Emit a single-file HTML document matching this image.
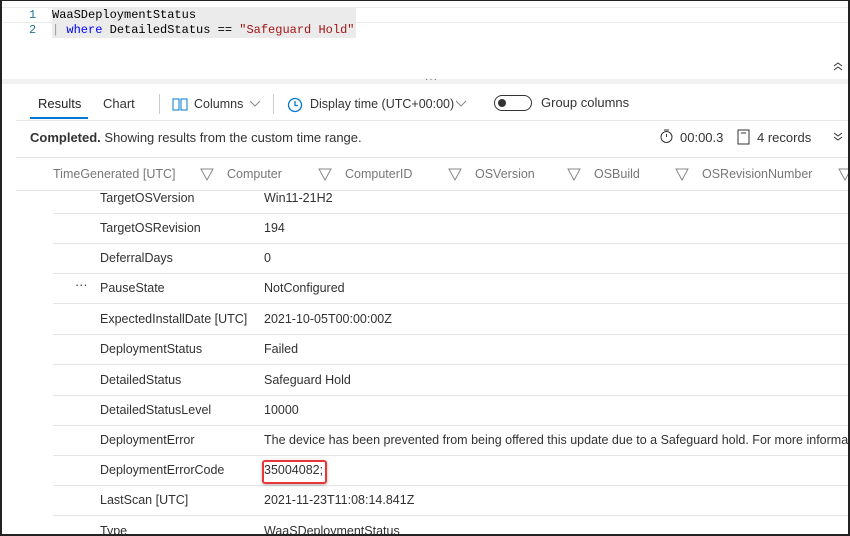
<!DOCTYPE html><html style="overflow:hidden;height:536px"><head><style>
body{margin:0;width:850px;height:536px;overflow:hidden;background:#fff;font-family:"Liberation Sans",sans-serif;position:relative}
.a{position:absolute;white-space:nowrap}
.frame{position:absolute;left:0;top:0;width:850px;height:536px;box-sizing:border-box;border:1px solid #222;border-left:2px solid #222;border-right:2px solid #222;border-bottom:2px solid #222;pointer-events:none;z-index:5}
.code{font-family:"Liberation Mono",monospace;font-size:12px}
.t{font-size:12.5px;color:#333}
.row{position:absolute;left:53px;right:0;height:30px;border-bottom:1px solid #e4e4e4}
.row span{position:absolute;top:8px;font-size:12.5px;color:#323130}
.h{font-size:12.5px;color:#777;top:167px}
.f{position:absolute;top:168px}
</style></head><body>
<div class="a" style="left:0;top:7px;width:850px;height:14px;border-top:1px solid #ececec;border-bottom:1px solid #ececec"></div>
<div class="a" style="left:52px;top:8px;width:304px;height:30px;background:#ebebeb"></div>
<div class="a code" style="left:29px;top:8px;color:#237893">1</div>
<div class="a code" style="left:29px;top:23px;color:#237893">2</div>
<div class="a code" style="left:52px;top:8px;color:#000">WaaSDeploymentStatus</div>
<div class="a code" style="left:52px;top:23px"><span style="color:#999">| </span><span style="color:#00f">where</span> <span style="color:#000">DetailedStatus ==</span> <span style="color:#a31515">"Safeguard Hold"</span></div>
<div class="a" style="left:0;top:79px;width:850px;height:5px;background:#f1f1f1"></div>
<div class="a" style="left:425px;top:74px;font-size:10px;color:#666;letter-spacing:1px">···</div>
<svg class="a" style="left:832px;top:61px" width="12" height="10"><path d="M2 5l4-3 4 3M2 9l4-3 4 3" fill="none" stroke="#333"/></svg>
<div class="a t" style="left:38px;top:96px;color:#222;font-size:13px">Results</div>
<div class="a" style="left:30px;top:117px;width:58px;height:2px;background:#0078d4"></div>
<div class="a t" style="left:103px;top:96px;font-size:13px">Chart</div>
<div class="a" style="left:159px;top:94px;width:1px;height:20px;background:#ccc"></div>
<svg class="a" style="left:172px;top:98px" width="16" height="13"><rect x="1" y="1" width="6" height="11" fill="none" stroke="#0078d4"/><rect x="9" y="1" width="6" height="11" fill="none" stroke="#0078d4"/></svg>
<div class="a t" style="left:194px;top:97px">Columns</div>
<svg class="a" style="left:249px;top:100px" width="12" height="8"><path d="M1 1l5 5 5-5" fill="none" stroke="#888"/></svg>
<div class="a" style="left:273px;top:94px;width:1px;height:20px;background:#ccc"></div>
<svg class="a" style="left:287px;top:97px" width="16" height="16"><circle cx="8" cy="8" r="6.5" fill="none" stroke="#0078d4" stroke-width="1.3"/><path d="M8 4v4.5h3" fill="none" stroke="#0078d4" stroke-width="1.3"/></svg>
<div class="a t" style="left:310px;top:97px;font-size:12.5px">Display time (UTC+00:00)</div>
<svg class="a" style="left:455px;top:100px" width="12" height="8"><path d="M1 1l5 5 5-5" fill="none" stroke="#888"/></svg>
<div class="a" style="left:494px;top:95px;width:36px;height:14px;border:1px solid #333;border-radius:8px"></div>
<div class="a" style="left:498px;top:99px;width:8px;height:8px;border-radius:50%;background:#333"></div>
<div class="a t" style="left:541px;top:95px;font-size:13px">Group columns</div>
<div class="a" style="left:16px;right:0;top:120px;height:1px;background:#e6e6e6"></div>
<div class="a t" style="left:30px;top:130px;font-size:13px"><b style="color:#333">Completed.</b> Showing results from the custom time range.</div>
<svg class="a" style="left:659px;top:128px" width="15" height="16"><circle cx="7.5" cy="9" r="5.5" fill="none" stroke="#333"/><path d="M5 2h5M7.5 9V6" stroke="#333"/></svg>
<div class="a t" style="left:680px;top:130px;font-size:13px">00:00.3</div>
<svg class="a" style="left:737px;top:129px" width="13" height="16"><rect x="1" y="1" width="11" height="14" fill="none" stroke="#333"/><path d="M4 4h5" stroke="#333"/></svg>
<div class="a t" style="left:757px;top:130px;font-size:13px">4 records</div>
<svg class="a" style="left:832px;top:132px" width="12" height="10"><path d="M2 1l4 3 4-3M2 5l4 3 4-3" fill="none" stroke="#333"/></svg>
<div class="a" style="left:16px;right:0;top:157px;height:1px;background:#e6e6e6"></div>
<div class="a h" style="left:53px">TimeGenerated [UTC]</div>
<svg class="f" style="left:200px" width="14" height="13"><path d="M1 1h12L7 12z" fill="none" stroke="#888"/></svg><div class="a h" style="left:227px">Computer</div>
<svg class="f" style="left:318px" width="14" height="13"><path d="M1 1h12L7 12z" fill="none" stroke="#888"/></svg><div class="a h" style="left:345px">ComputerID</div>
<svg class="f" style="left:448px" width="14" height="13"><path d="M1 1h12L7 12z" fill="none" stroke="#888"/></svg><div class="a h" style="left:475px">OSVersion</div>
<svg class="f" style="left:567px" width="14" height="13"><path d="M1 1h12L7 12z" fill="none" stroke="#888"/></svg><div class="a h" style="left:594px">OSBuild</div>
<svg class="f" style="left:675px" width="14" height="13"><path d="M1 1h12L7 12z" fill="none" stroke="#888"/></svg><div class="a h" style="left:702px">OSRevisionNumber</div>
<svg class="f" style="left:838px" width="14" height="13"><path d="M1 1h12L7 12z" fill="none" stroke="#888"/></svg>
<div class="a" style="left:16px;right:0;top:190px;height:1px;background:#e6e6e6"></div>
<div class="row" style="top:183px"><span style="left:47px">TargetOSVersion</span><span style="left:211px">Win11-21H2</span></div>
<div class="row" style="top:213px"><span style="left:47px">TargetOSRevision</span><span style="left:211px">194</span></div>
<div class="row" style="top:243px"><span style="left:47px">DeferralDays</span><span style="left:211px">0</span></div>
<div class="row" style="top:273px"><span style="left:22px;top:5px">···</span><span style="left:47px">PauseState</span><span style="left:211px">NotConfigured</span></div>
<div class="row" style="top:304px"><span style="left:47px">ExpectedInstallDate [UTC]</span><span style="left:211px">2021-10-05T00:00:00Z</span></div>
<div class="row" style="top:334px"><span style="left:47px">DeploymentStatus</span><span style="left:211px">Failed</span></div>
<div class="row" style="top:365px"><span style="left:47px">DetailedStatus</span><span style="left:211px">Safeguard Hold</span></div>
<div class="row" style="top:395px"><span style="left:47px">DetailedStatusLevel</span><span style="left:211px">10000</span></div>
<div class="row" style="top:425px"><span style="left:47px">DeploymentError</span><span style="left:211px">The device has been prevented from being offered this update due to a Safeguard hold. For more informa</span></div>
<div class="row" style="top:455px"><span style="left:47px">DeploymentErrorCode</span><span style="left:211px">35004082;</span></div>
<div class="a" style="left:262px;top:460px;width:61px;height:20px;border:2px solid #e8363b;border-radius:3px;box-shadow:0 1px 3px rgba(0,0,0,.3)"></div>
<div class="row" style="top:485px"><span style="left:47px">LastScan [UTC]</span><span style="left:211px">2021-11-23T11:08:14.841Z</span></div>
<div class="row" style="top:516px"><span style="left:47px">Type</span><span style="left:211px">WaaSDeploymentStatus</span></div>
<div class="frame"></div>
</body></html>
